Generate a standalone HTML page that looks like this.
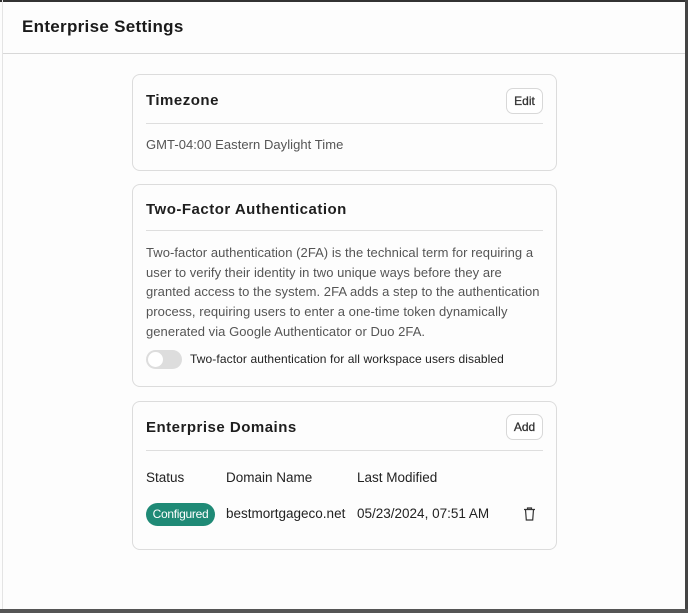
<!DOCTYPE html>
<html><head><style>
*{margin:0;padding:0;box-sizing:border-box}
body{width:688px;height:613px;background:#fdfdfd;font-family:"Liberation Sans",sans-serif;position:relative;overflow:hidden;color:#222}
.a{position:absolute;white-space:nowrap}
.card{position:absolute;left:132px;width:425px;border:1px solid #dcdcdc;border-radius:8px;background:#fdfdfd}
.h{font-size:15px;font-weight:bold;color:#1e1e1e;letter-spacing:0.5px}
.hr{position:absolute;left:146px;width:397px;height:1px;background:#dedede}
.btn{position:absolute;border:1px solid #d8d8d8;border-radius:7px;font-size:12px;color:#333;text-align:center;background:#fff;-webkit-text-stroke:0.3px #333}
.p{font-size:13px;color:#555;letter-spacing:0.05px}
</style></head><body>
<div class="a" style="left:0;top:0;width:688px;height:2px;background:#333"></div>
<div class="a" style="left:685px;top:0;width:3px;height:613px;background:#444"></div>
<div class="a" style="left:0;top:609px;width:688px;height:4px;background:#555"></div>
<div class="a" style="left:2px;top:0;width:1px;height:609px;background:#e4e4e4"></div>
<div class="a" style="left:22px;top:17px;font-size:17px;font-weight:bold;color:#1a1a1a;letter-spacing:0.3px">Enterprise Settings</div>
<div class="a" style="left:3px;top:53px;width:682px;height:1px;background:#d8d8d8"></div>

<div class="card" style="top:74px;height:97px"></div>
<div class="a h" style="left:146px;top:92px">Timezone</div>
<div class="btn" style="left:506px;top:88px;width:37px;height:26px;line-height:24px">Edit</div>
<div class="hr" style="top:123px"></div>
<div class="a p" style="left:146px;top:137px">GMT-04:00 Eastern Daylight Time</div>

<div class="card" style="top:184px;height:203px"></div>
<div class="a h" style="left:146px;top:201px">Two-Factor Authentication</div>
<div class="hr" style="top:230px"></div>
<div class="a p" style="left:146px;top:243px;line-height:19.7px">Two-factor authentication (2FA) is the technical term for requiring a<br>user to verify their identity in two unique ways before they are<br>granted access to the system. 2FA adds a step to the authentication<br>process, requiring users to enter a one-time token dynamically<br>generated via Google Authenticator or Duo 2FA.</div>
<div class="a" style="left:146px;top:350px;width:36px;height:19px;border-radius:10px;background:#ddd"></div>
<div class="a" style="left:148px;top:352px;width:15px;height:15px;border-radius:50%;background:#fff"></div>
<div class="a" style="left:190px;top:352px;font-size:12px;color:#222;letter-spacing:0.1px">Two-factor authentication for all workspace users disabled</div>

<div class="card" style="top:401px;height:149px"></div>
<div class="a h" style="left:146px;top:419px">Enterprise Domains</div>
<div class="btn" style="left:506px;top:414px;width:37px;height:26px;line-height:24px">Add</div>
<div class="hr" style="top:450px"></div>
<div class="a" style="left:146px;top:470px;font-size:13.5px">Status</div>
<div class="a" style="left:226px;top:470px;font-size:13.5px">Domain Name</div>
<div class="a" style="left:357px;top:470px;font-size:13.5px">Last Modified</div>
<div class="a" style="left:146px;top:503px;width:69px;height:23px;border-radius:12px;background:#1f8a76;color:#fff;font-size:12px;text-align:center;line-height:23px;letter-spacing:-0.3px">Configured</div>
<div class="a" style="left:226px;top:506px;font-size:13.5px">bestmortgageco.net</div>
<div class="a" style="left:357px;top:506px;font-size:13.5px">05/23/2024, 07:51 AM</div>
<svg class="a" style="left:523px;top:507px" width="13" height="14" viewBox="0 0 13 14" fill="none" stroke="#333" stroke-width="1.2"><path d="M1 2.5h11M4.5 2.5V1h4v1.5M2.5 2.5l.8 10.5h6.4l.8-10.5"/></svg>
</body></html>
